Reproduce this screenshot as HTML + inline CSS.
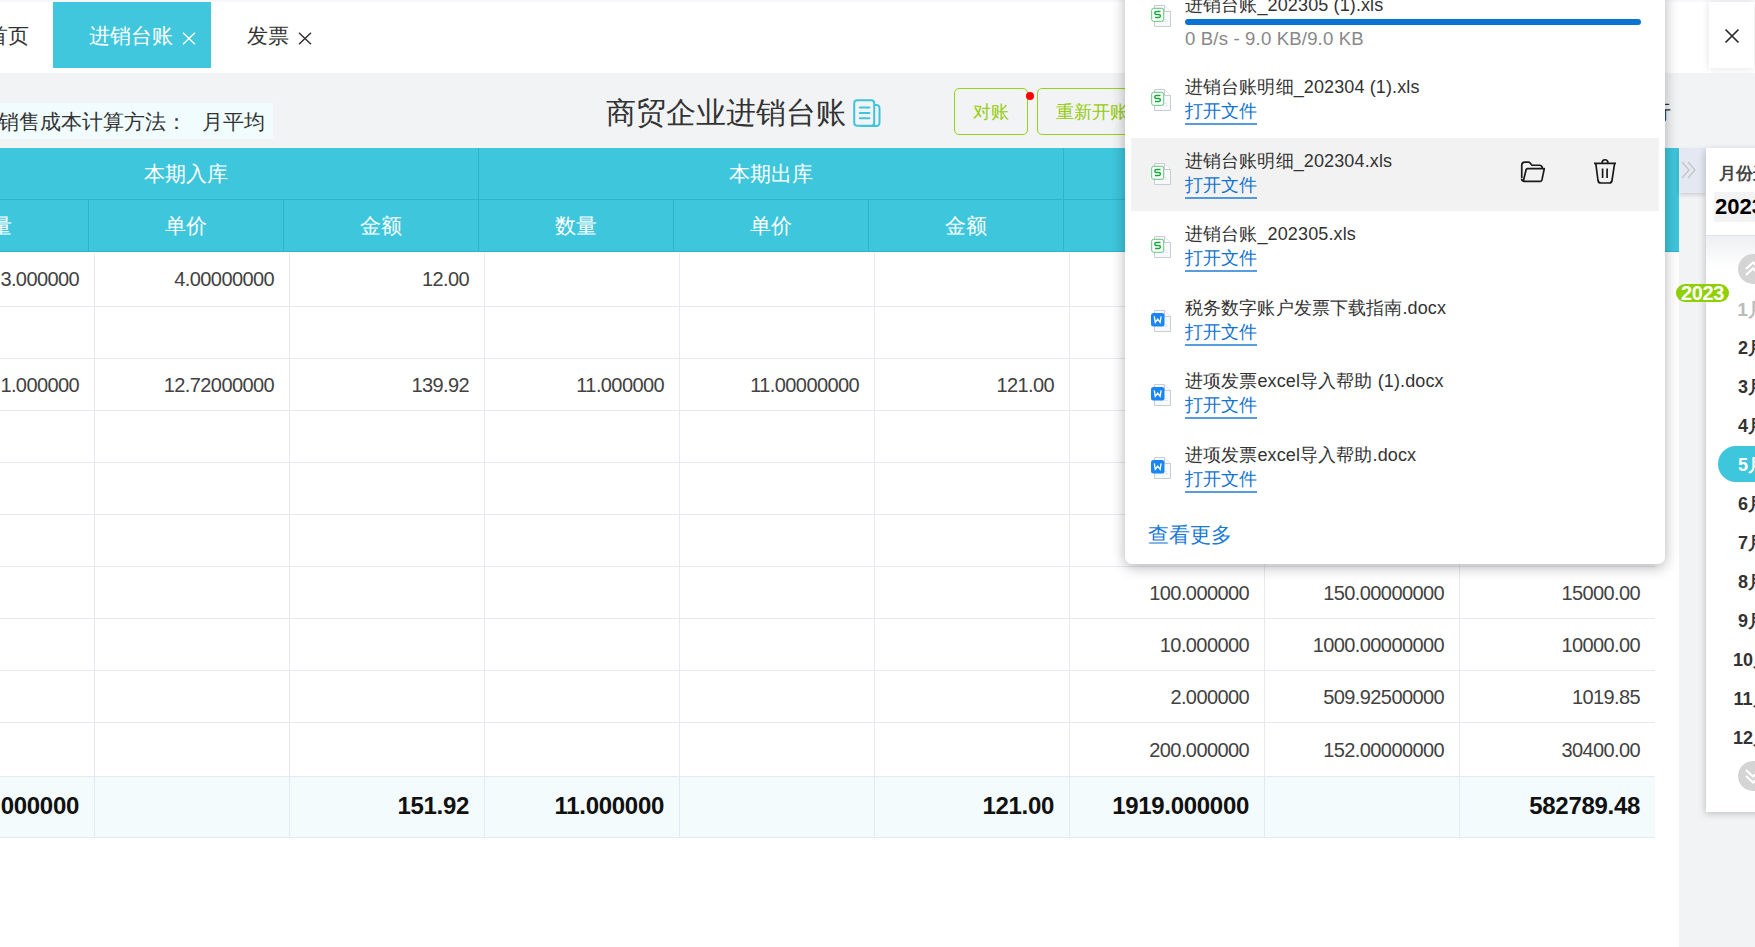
<!DOCTYPE html>
<html><head><meta charset="utf-8">
<style>
*{margin:0;padding:0;box-sizing:border-box}
html,body{width:1755px;height:947px;overflow:hidden;background:#f2f3f5;font-family:"Liberation Sans",sans-serif;color:#333;position:relative}
.a{position:absolute}
#topbar{left:0;top:0;width:1755px;height:73px;background:#fff;border-top:2px solid #f7f8fb}
.tab{top:3px;height:66px;line-height:66px;font-size:21px;white-space:nowrap}
#label{left:0;top:103px;width:273px;height:36px;background:#f0fcfe}
.lt{font-size:21px;line-height:36px;white-space:nowrap;top:104px}
#title{left:606px;top:93px;font-size:30px;line-height:40px;color:#333;white-space:nowrap}
.btn{top:88px;height:47px;border:1.5px solid #95d418;border-radius:5px;color:#95cc0c;font-size:18px;line-height:46px;white-space:nowrap;text-align:center}
#thead{left:0;top:148px;width:1679px;height:104px;background:#3ec6dc}
.hl{background:#2fb3c9}
.ht{color:#fff;font-size:21px;height:52px;line-height:52px;text-align:center;white-space:nowrap}
#tbody{left:0;top:252px;width:1679px;height:695px;background:#fff}
.vl{width:1px;background:#e6e8f3}
.hrow{height:1px;background:#e6e8f3;left:0;width:1655px}
.num{font-size:20px;letter-spacing:-0.6px;color:#424242;text-align:right;white-space:nowrap;width:300px}
.bnum{font-size:24px;letter-spacing:-0.3px;font-weight:bold;color:#111;text-align:right;white-space:nowrap;width:300px}
.dd{left:1125px;top:-10px;width:540px;height:574px;background:#fff;border-radius:0 0 7px 7px;box-shadow:0 3px 14px rgba(0,0,0,.3)}
.fn{font-size:18px;letter-spacing:0.12px;color:#333;white-space:nowrap;line-height:24px}
.lk{font-size:18px;color:#0f72cf;white-space:nowrap;line-height:24px}
.ul{height:2px;width:72px;left:1185px;background:rgba(15,114,207,.7)}
.mo{font-size:18px;font-weight:bold;color:#333;white-space:nowrap;line-height:39px}
</style></head><body>
<div id="topbar" class="a"></div>
<div class="a tab" style="left:-13.5px;color:#333">首页</div>
<div class="a" style="left:53px;top:2px;width:158px;height:66px;background:#40c7dd"></div>
<div class="a tab" style="left:89px;color:#fff">进销台账</div>
<svg class="a" style="left:182px;top:32px" width="14" height="13" viewBox="0 0 14 13"><path d="M1 0.8L13 12.2M13 0.8L1 12.2" stroke="#fff" stroke-width="1.4"/></svg>
<div class="a tab" style="left:247px;color:#333">发票</div>
<svg class="a" style="left:298px;top:32px" width="14" height="13" viewBox="0 0 14 13"><path d="M1 0.8L13 12.2M13 0.8L1 12.2" stroke="#333" stroke-width="1.5"/></svg>
<div id="label" class="a"></div>
<div class="a lt" style="left:-2px">销售成本计算方法：</div>
<div class="a lt" style="left:202px">月平均</div>
<div id="title" class="a">商贸企业进销台账</div>
<svg class="a" style="left:853px;top:99px" width="28" height="28" viewBox="0 0 28 28"><rect x="1.2" y="1.2" width="20" height="25.5" rx="3" fill="none" stroke="#3ec5dc" stroke-width="2"/><path d="M21 6h2.5a3 3 0 0 1 3 3v15a3 3 0 0 1-3 3h-16" fill="none" stroke="#3ec5dc" stroke-width="2"/><path d="M6.8 8.4h9.6M6.8 13.9h9.6M6.8 19.3h9.6" stroke="#3ec5dc" stroke-width="2" stroke-linecap="round"/></svg>
<div class="a btn" style="left:954px;width:74px">对账</div>
<div class="a" style="left:1025.5px;top:92px;width:8px;height:8px;border-radius:50%;background:#f00"></div>
<div class="a btn" style="left:1037px;width:130px;text-align:left;padding-left:18px">重新开账</div>
<div class="a" style="left:1650px;top:98px;font-size:21px;line-height:28px;color:#333">行</div>
<div id="tbody" class="a"></div>
<div class="a" style="left:0;top:777px;width:1655px;height:60px;background:#f3fbfd"></div>
<div class="a hrow" style="top:306px"></div>
<div class="a hrow" style="top:358px"></div>
<div class="a hrow" style="top:410px"></div>
<div class="a hrow" style="top:462px"></div>
<div class="a hrow" style="top:514px"></div>
<div class="a hrow" style="top:566px"></div>
<div class="a hrow" style="top:618px"></div>
<div class="a hrow" style="top:670px"></div>
<div class="a hrow" style="top:722px"></div>
<div class="a hrow" style="top:776px"></div>
<div class="a hrow" style="top:837px"></div>
<div class="a vl" style="left:94px;top:253px;height:584px"></div>
<div class="a vl" style="left:289px;top:253px;height:584px"></div>
<div class="a vl" style="left:484px;top:253px;height:584px"></div>
<div class="a vl" style="left:679px;top:253px;height:584px"></div>
<div class="a vl" style="left:874px;top:253px;height:584px"></div>
<div class="a vl" style="left:1069px;top:253px;height:584px"></div>
<div class="a vl" style="left:1264px;top:253px;height:584px"></div>
<div class="a vl" style="left:1459px;top:253px;height:584px"></div>
<div class="a num" style="left:-221px;top:252px;height:54px;line-height:54px">3.000000</div>
<div class="a num" style="left:-26px;top:252px;height:54px;line-height:54px">4.00000000</div>
<div class="a num" style="left:169px;top:252px;height:54px;line-height:54px">12.00</div>
<div class="a num" style="left:-221px;top:359px;height:52px;line-height:52px">1.000000</div>
<div class="a num" style="left:-26px;top:359px;height:52px;line-height:52px">12.72000000</div>
<div class="a num" style="left:169px;top:359px;height:52px;line-height:52px">139.92</div>
<div class="a num" style="left:364px;top:359px;height:52px;line-height:52px">11.000000</div>
<div class="a num" style="left:559px;top:359px;height:52px;line-height:52px">11.00000000</div>
<div class="a num" style="left:754px;top:359px;height:52px;line-height:52px">121.00</div>
<div class="a num" style="left:949px;top:567px;height:52px;line-height:52px">100.000000</div>
<div class="a num" style="left:1144px;top:567px;height:52px;line-height:52px">150.00000000</div>
<div class="a num" style="left:1340px;top:567px;height:52px;line-height:52px">15000.00</div>
<div class="a num" style="left:949px;top:619px;height:52px;line-height:52px">10.000000</div>
<div class="a num" style="left:1144px;top:619px;height:52px;line-height:52px">1000.00000000</div>
<div class="a num" style="left:1340px;top:619px;height:52px;line-height:52px">10000.00</div>
<div class="a num" style="left:949px;top:671px;height:52px;line-height:52px">2.000000</div>
<div class="a num" style="left:1144px;top:671px;height:52px;line-height:52px">509.92500000</div>
<div class="a num" style="left:1340px;top:671px;height:52px;line-height:52px">1019.85</div>
<div class="a num" style="left:949px;top:723px;height:54px;line-height:54px">200.000000</div>
<div class="a num" style="left:1144px;top:723px;height:54px;line-height:54px">152.00000000</div>
<div class="a num" style="left:1340px;top:723px;height:54px;line-height:54px">30400.00</div>
<div class="a bnum" style="left:-221px;top:775px;height:61px;line-height:61px">4.000000</div>
<div class="a bnum" style="left:169px;top:775px;height:61px;line-height:61px">151.92</div>
<div class="a bnum" style="left:364px;top:775px;height:61px;line-height:61px">11.000000</div>
<div class="a bnum" style="left:754px;top:775px;height:61px;line-height:61px">121.00</div>
<div class="a bnum" style="left:949px;top:775px;height:61px;line-height:61px">1919.000000</div>
<div class="a bnum" style="left:1340px;top:775px;height:61px;line-height:61px">582789.48</div>
<div id="thead" class="a"></div>
<div class="a hl" style="left:88px;top:200px;width:1px;height:52px"></div>
<div class="a hl" style="left:283px;top:200px;width:1px;height:52px"></div>
<div class="a hl" style="left:478px;top:200px;width:1px;height:52px"></div>
<div class="a hl" style="left:673px;top:200px;width:1px;height:52px"></div>
<div class="a hl" style="left:868px;top:200px;width:1px;height:52px"></div>
<div class="a hl" style="left:1063px;top:200px;width:1px;height:52px"></div>
<div class="a hl" style="left:1258px;top:200px;width:1px;height:52px"></div>
<div class="a hl" style="left:1453px;top:200px;width:1px;height:52px"></div>
<div class="a hl" style="left:478px;top:148px;width:1px;height:52px"></div>
<div class="a hl" style="left:1063px;top:148px;width:1px;height:52px"></div>
<div class="a hl" style="left:0;top:199px;width:1655px;height:1px"></div>
<div class="a hl" style="left:0;top:251px;width:1679px;height:1px"></div>
<div class="a ht" style="left:-107px;width:585px;top:148px">本期入库</div>
<div class="a ht" style="left:478px;width:585px;top:148px">本期出库</div>
<div class="a ht" style="left:1063px;width:585px;top:148px">期末结存</div>
<div class="a ht" style="left:-107px;width:195px;top:200px">数量</div>
<div class="a ht" style="left:88px;width:195px;top:200px">单价</div>
<div class="a ht" style="left:283px;width:195px;top:200px">金额</div>
<div class="a ht" style="left:478px;width:195px;top:200px">数量</div>
<div class="a ht" style="left:673px;width:195px;top:200px">单价</div>
<div class="a ht" style="left:868px;width:195px;top:200px">金额</div>
<div class="a ht" style="left:1063px;width:195px;top:200px">数量</div>
<div class="a ht" style="left:1258px;width:195px;top:200px">单价</div>
<div class="a ht" style="left:1453px;width:195px;top:200px">金额</div>
<!-- right strip -->
<div class="a" style="left:1679px;top:148px;width:76px;height:799px;background:#f2f3f5"></div>
<div class="a" style="left:1679px;top:148px;width:27px;height:45px;background:#e4e8f3;box-shadow:0 2px 4px rgba(0,0,0,.15)"></div>
<svg class="a" style="left:1681px;top:161px" width="16" height="18" viewBox="0 0 16 18"><path d="M1 1L8 9L1 17M7 1L14 9L7 17" fill="none" stroke="#c3c3c3" stroke-width="1.2"/></svg>
<!-- month panel -->
<div class="a" style="left:1706px;top:148px;width:60px;height:664px;background:#fff;box-shadow:-1px 2px 7px rgba(0,0,0,.2)"></div>
<div class="a" style="left:1719px;top:160px;font-size:17px;font-weight:bold;color:#444;line-height:28px;white-space:nowrap">月份选择</div>
<div class="a" style="left:1714px;top:192px;width:50px;height:30px;background:#f3f3f3"></div>
<div class="a" style="left:1715px;top:192px;font-size:22px;font-weight:bold;color:#000;line-height:30px">2023</div>
<div class="a" style="left:1676px;top:284px;width:53px;height:18px;border-radius:9px;background:#8fd005;color:#fff;font-size:20px;letter-spacing:-0.4px;font-weight:bold;line-height:19px;text-align:center">2023</div>
<div class="a" style="left:1706px;top:235px;width:60px;height:1px;background:#e2e3e8"></div>
<div class="a" style="left:1706px;top:236px;width:60px;height:32px;background:linear-gradient(#eeeff2,#fff)"></div>
<svg class="a" style="left:1738px;top:254px" width="30" height="30" viewBox="0 0 30 30"><circle cx="15" cy="15" r="15" fill="#d4d4d4"/><path d="M8 15L15 8.5L22 15M8 21L15 14.5L22 21" fill="none" stroke="#fff" stroke-width="2.2"/></svg>
<svg class="a" style="left:1738px;top:761px" width="30" height="30" viewBox="0 0 30 30"><circle cx="15" cy="15" r="15" fill="#d4d4d4"/><path d="M8 9L15 15.5L22 9M8 15L15 21.5L22 15" fill="none" stroke="#fff" stroke-width="2.2"/></svg>
<div class="a" style="left:1718px;top:446px;width:60px;height:36px;border-radius:18px;background:#3ec6dc"></div>
<!-- close box -->
<div class="a" style="left:1709px;top:2px;width:45px;height:66px;background:#fff;box-shadow:0 0 8px rgba(0,0,0,.12)"></div>
<svg class="a" style="left:1724px;top:28px" width="16" height="16" viewBox="0 0 16 16"><path d="M1.5 1.5L14.5 14.5M14.5 1.5L1.5 14.5" stroke="#2a2a2a" stroke-width="1.7"/></svg>
<div class="a" style="left:1700px;top:290px;width:104px;text-align:center;font-size:19px;font-weight:bold;color:#bbb;line-height:39px">1月</div>
<div class="a mo" style="left:1700px;top:329px;width:104px;text-align:center">2月</div>
<div class="a mo" style="left:1700px;top:368px;width:104px;text-align:center">3月</div>
<div class="a mo" style="left:1700px;top:407px;width:104px;text-align:center">4月</div>
<div class="a mo" style="left:1700px;top:446px;width:104px;text-align:center;color:#fff">5月</div>
<div class="a mo" style="left:1700px;top:485px;width:104px;text-align:center">6月</div>
<div class="a mo" style="left:1700px;top:524px;width:104px;text-align:center">7月</div>
<div class="a mo" style="left:1700px;top:563px;width:104px;text-align:center">8月</div>
<div class="a mo" style="left:1700px;top:602px;width:104px;text-align:center">9月</div>
<div class="a mo" style="left:1700px;top:641px;width:104px;text-align:center">10月</div>
<div class="a mo" style="left:1700px;top:680px;width:104px;text-align:center">11月</div>
<div class="a mo" style="left:1700px;top:719px;width:104px;text-align:center">12月</div>
<!-- dropdown -->
<div class="a dd"></div>
<div class="a" style="left:1131px;top:138px;width:528px;height:73px;background:#f2f2f2"></div>
<svg class="a" style="left:1151px;top:5px" width="21" height="23" viewBox="0 0 21 23"><path d="M3.5 0.5H13.5L19.5 6.5V21.5H3.5Z" fill="#f8f9fb" stroke="#c9ccd6" stroke-width="1"/><path d="M13.5 0.5V6.5H19.5" fill="#fff" stroke="#c9ccd6" stroke-width="1"/><path d="M9 16.5H17M13 14.5H16" stroke="#e3e5ea" stroke-width="0.8"/><rect x="0.7" y="3.3" width="12" height="13" rx="2" fill="#fff" stroke="#62c47e" stroke-width="1"/><path d="M9.5 6.5H5.3a1.5 1.5 0 0 0 0 3h2.6a1.5 1.5 0 0 1 0 3H4" fill="none" stroke="#14a83a" stroke-width="1.4"/></svg>
<svg class="a" style="left:1151px;top:89px" width="21" height="23" viewBox="0 0 21 23"><path d="M3.5 0.5H13.5L19.5 6.5V21.5H3.5Z" fill="#f8f9fb" stroke="#c9ccd6" stroke-width="1"/><path d="M13.5 0.5V6.5H19.5" fill="#fff" stroke="#c9ccd6" stroke-width="1"/><path d="M9 16.5H17M13 14.5H16" stroke="#e3e5ea" stroke-width="0.8"/><rect x="0.7" y="3.3" width="12" height="13" rx="2" fill="#fff" stroke="#62c47e" stroke-width="1"/><path d="M9.5 6.5H5.3a1.5 1.5 0 0 0 0 3h2.6a1.5 1.5 0 0 1 0 3H4" fill="none" stroke="#14a83a" stroke-width="1.4"/></svg>
<svg class="a" style="left:1151px;top:163px" width="21" height="23" viewBox="0 0 21 23"><path d="M3.5 0.5H13.5L19.5 6.5V21.5H3.5Z" fill="#f8f9fb" stroke="#c9ccd6" stroke-width="1"/><path d="M13.5 0.5V6.5H19.5" fill="#fff" stroke="#c9ccd6" stroke-width="1"/><path d="M9 16.5H17M13 14.5H16" stroke="#e3e5ea" stroke-width="0.8"/><rect x="0.7" y="3.3" width="12" height="13" rx="2" fill="#fff" stroke="#62c47e" stroke-width="1"/><path d="M9.5 6.5H5.3a1.5 1.5 0 0 0 0 3h2.6a1.5 1.5 0 0 1 0 3H4" fill="none" stroke="#14a83a" stroke-width="1.4"/></svg>
<svg class="a" style="left:1151px;top:236px" width="21" height="23" viewBox="0 0 21 23"><path d="M3.5 0.5H13.5L19.5 6.5V21.5H3.5Z" fill="#f8f9fb" stroke="#c9ccd6" stroke-width="1"/><path d="M13.5 0.5V6.5H19.5" fill="#fff" stroke="#c9ccd6" stroke-width="1"/><path d="M9 16.5H17M13 14.5H16" stroke="#e3e5ea" stroke-width="0.8"/><rect x="0.7" y="3.3" width="12" height="13" rx="2" fill="#fff" stroke="#62c47e" stroke-width="1"/><path d="M9.5 6.5H5.3a1.5 1.5 0 0 0 0 3h2.6a1.5 1.5 0 0 1 0 3H4" fill="none" stroke="#14a83a" stroke-width="1.4"/></svg>
<svg class="a" style="left:1151px;top:310px" width="21" height="23" viewBox="0 0 21 23"><path d="M3.5 0.5H13.5L19.5 6.5V21.5H3.5Z" fill="#f8f9fb" stroke="#c9ccd6" stroke-width="1"/><path d="M13.5 0.5V6.5H19.5" fill="#fff" stroke="#c9ccd6" stroke-width="1"/><path d="M9 16.5H17M13 14.5H16" stroke="#e3e5ea" stroke-width="0.8"/><rect x="0" y="3" width="13.5" height="13.5" rx="2.5" fill="#1a86f5"/><path d="M3.3 6.3L4.3 12.3L6.7 9L9.1 12.3L10.1 6.3" fill="none" stroke="#fff" stroke-width="1.3"/></svg>
<svg class="a" style="left:1151px;top:384px" width="21" height="23" viewBox="0 0 21 23"><path d="M3.5 0.5H13.5L19.5 6.5V21.5H3.5Z" fill="#f8f9fb" stroke="#c9ccd6" stroke-width="1"/><path d="M13.5 0.5V6.5H19.5" fill="#fff" stroke="#c9ccd6" stroke-width="1"/><path d="M9 16.5H17M13 14.5H16" stroke="#e3e5ea" stroke-width="0.8"/><rect x="0" y="3" width="13.5" height="13.5" rx="2.5" fill="#1a86f5"/><path d="M3.3 6.3L4.3 12.3L6.7 9L9.1 12.3L10.1 6.3" fill="none" stroke="#fff" stroke-width="1.3"/></svg>
<svg class="a" style="left:1151px;top:457px" width="21" height="23" viewBox="0 0 21 23"><path d="M3.5 0.5H13.5L19.5 6.5V21.5H3.5Z" fill="#f8f9fb" stroke="#c9ccd6" stroke-width="1"/><path d="M13.5 0.5V6.5H19.5" fill="#fff" stroke="#c9ccd6" stroke-width="1"/><path d="M9 16.5H17M13 14.5H16" stroke="#e3e5ea" stroke-width="0.8"/><rect x="0" y="3" width="13.5" height="13.5" rx="2.5" fill="#1a86f5"/><path d="M3.3 6.3L4.3 12.3L6.7 9L9.1 12.3L10.1 6.3" fill="none" stroke="#fff" stroke-width="1.3"/></svg>

<div class="a fn" style="left:1185px;top:-7px">进销台账_202305 (1).xls</div>
<div class="a" style="left:1185px;top:19px;width:456px;height:6px;border-radius:3px;background:#0a73d2"></div>
<div class="a fn" style="left:1185px;top:27px;color:#888;font-size:18.6px;letter-spacing:0.15px">0 B/s - 9.0 KB/9.0 KB</div>
<div class="a fn" style="left:1185px;top:75px">进销台账明细_202304 (1).xls</div>
<div class="a lk" style="left:1185px;top:99px">打开文件</div>
<div class="a ul" style="top:123px"></div>
<div class="a fn" style="left:1185px;top:149px">进销台账明细_202304.xls</div>
<div class="a lk" style="left:1185px;top:173px">打开文件</div>
<div class="a ul" style="top:197px"></div>
<div class="a fn" style="left:1185px;top:222px">进销台账_202305.xls</div>
<div class="a lk" style="left:1185px;top:246px">打开文件</div>
<div class="a ul" style="top:270px"></div>
<div class="a fn" style="left:1185px;top:296px">税务数字账户发票下载指南.docx</div>
<div class="a lk" style="left:1185px;top:320px">打开文件</div>
<div class="a ul" style="top:344px"></div>
<div class="a fn" style="left:1185px;top:369px">进项发票excel导入帮助 (1).docx</div>
<div class="a lk" style="left:1185px;top:393px">打开文件</div>
<div class="a ul" style="top:417px"></div>
<div class="a fn" style="left:1185px;top:443px">进项发票excel导入帮助.docx</div>
<div class="a lk" style="left:1185px;top:467px">打开文件</div>
<div class="a ul" style="top:491px"></div>
<div class="a" style="left:1148px;top:521px;font-size:21px;color:#1a7ad6;line-height:28px;white-space:nowrap">查看更多</div>
<svg class="a" style="left:1520px;top:160px" width="26" height="24" viewBox="0 0 26 24"><path d="M1.75 18V5.2a3 3 0 0 1 3-3H8.5a2 2 0 0 1 1.4.6L12 5.25H19.3a3 3 0 0 1 3 3V8.6" fill="none" stroke="#1a1a1a" stroke-width="1.7" stroke-linejoin="round"/><path d="M3.3 21.3L6.1 9.8a1.5 1.5 0 0 1 1.4-1.2H24.3L21.9 20.1a1.5 1.5 0 0 1-1.4 1.2H3.8a2.2 2.2 0 0 1-2.05-2.6" fill="none" stroke="#1a1a1a" stroke-width="1.7" stroke-linejoin="round"/></svg>
<svg class="a" style="left:1593px;top:158px" width="24" height="27" viewBox="0 0 24 27"><path d="M1 5.3H23M9.1 5.3V4.7a2.95 2.95 0 0 1 5.9 0V5.3M2.8 5.3L5 22.5a3 3 0 0 0 3 2.5H16a3 3 0 0 0 3-2.5L21.6 5.3M9.6 10.5V20M14.1 10.5V20" fill="none" stroke="#1a1a1a" stroke-width="1.7" stroke-linejoin="round"/></svg>
</body></html>
